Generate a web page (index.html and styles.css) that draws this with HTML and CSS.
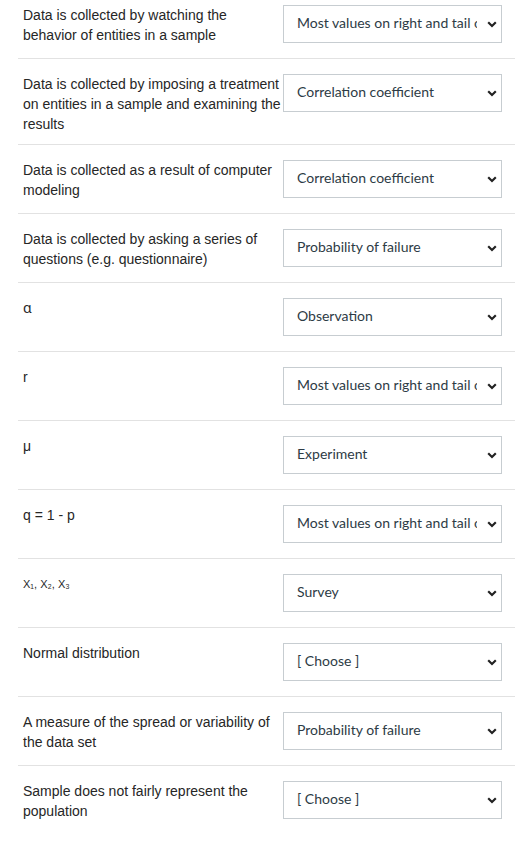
FILE: index.html
```html
<!DOCTYPE html>
<html lang="en">
<head>
<meta charset="utf-8">
<title>Matching</title>
<link rel="stylesheet" href="styles.css">
</head>
<body>
<div class="answers">
  <div class="row first">
    <div class="label">Data is collected by watching the behavior of entities in a sample</div>
    <div class="pick"><select><option>Most values on right and tail on left</option></select><svg class="chev" viewBox="0 0 10 7" width="10" height="7"><path d="M1.2 1.3 L5 5 L8.8 1.3" fill="none" stroke="#222" stroke-width="2.2"/></svg></div>
  </div>
  <div class="row">
    <div class="label">Data is collected by imposing a treatment on entities in a sample and examining the results</div>
    <div class="pick"><select><option>Correlation coefficient</option></select><svg class="chev" viewBox="0 0 10 7" width="10" height="7"><path d="M1.2 1.3 L5 5 L8.8 1.3" fill="none" stroke="#222" stroke-width="2.2"/></svg></div>
  </div>
  <div class="row">
    <div class="label">Data is collected as a result of computer modeling</div>
    <div class="pick"><select><option>Correlation coefficient</option></select><svg class="chev" viewBox="0 0 10 7" width="10" height="7"><path d="M1.2 1.3 L5 5 L8.8 1.3" fill="none" stroke="#222" stroke-width="2.2"/></svg></div>
  </div>
  <div class="row">
    <div class="label">Data is collected by asking a series of questions (e.g. questionnaire)</div>
    <div class="pick"><select><option>Probability of failure</option></select><svg class="chev" viewBox="0 0 10 7" width="10" height="7"><path d="M1.2 1.3 L5 5 L8.8 1.3" fill="none" stroke="#222" stroke-width="2.2"/></svg></div>
  </div>
  <div class="row">
    <div class="label greek">α</div>
    <div class="pick"><select><option>Observation</option></select><svg class="chev" viewBox="0 0 10 7" width="10" height="7"><path d="M1.2 1.3 L5 5 L8.8 1.3" fill="none" stroke="#222" stroke-width="2.2"/></svg></div>
  </div>
  <div class="row">
    <div class="label">r</div>
    <div class="pick"><select><option>Most values on right and tail on left</option></select><svg class="chev" viewBox="0 0 10 7" width="10" height="7"><path d="M1.2 1.3 L5 5 L8.8 1.3" fill="none" stroke="#222" stroke-width="2.2"/></svg></div>
  </div>
  <div class="row">
    <div class="label">μ</div>
    <div class="pick"><select><option>Experiment</option></select><svg class="chev" viewBox="0 0 10 7" width="10" height="7"><path d="M1.2 1.3 L5 5 L8.8 1.3" fill="none" stroke="#222" stroke-width="2.2"/></svg></div>
  </div>
  <div class="row">
    <div class="label">q = 1 - p</div>
    <div class="pick"><select><option>Most values on right and tail on left</option></select><svg class="chev" viewBox="0 0 10 7" width="10" height="7"><path d="M1.2 1.3 L5 5 L8.8 1.3" fill="none" stroke="#222" stroke-width="2.2"/></svg></div>
  </div>
  <div class="row">
    <div class="label small">X₁, X₂, X₃</div>
    <div class="pick"><select><option>Survey</option></select><svg class="chev" viewBox="0 0 10 7" width="10" height="7"><path d="M1.2 1.3 L5 5 L8.8 1.3" fill="none" stroke="#222" stroke-width="2.2"/></svg></div>
  </div>
  <div class="row">
    <div class="label">Normal distribution</div>
    <div class="pick"><select><option>[ Choose ]</option></select><svg class="chev" viewBox="0 0 10 7" width="10" height="7"><path d="M1.2 1.3 L5 5 L8.8 1.3" fill="none" stroke="#222" stroke-width="2.2"/></svg></div>
  </div>
  <div class="row">
    <div class="label">A measure of the spread or variability of the data set</div>
    <div class="pick"><select><option>Probability of failure</option></select><svg class="chev" viewBox="0 0 10 7" width="10" height="7"><path d="M1.2 1.3 L5 5 L8.8 1.3" fill="none" stroke="#222" stroke-width="2.2"/></svg></div>
  </div>
  <div class="row">
    <div class="label">Sample does not fairly represent the population</div>
    <div class="pick"><select><option>[ Choose ]</option></select><svg class="chev" viewBox="0 0 10 7" width="10" height="7"><path d="M1.2 1.3 L5 5 L8.8 1.3" fill="none" stroke="#222" stroke-width="2.2"/></svg></div>
  </div>
</div>
</body>
</html>
```
FILE: styles.css
```css
html, body {
  margin: 0;
  padding: 0;
  background: #ffffff;
}

.answers {
  margin-left: 18px;
}

.row {
  display: flex;
  align-items: flex-start;
  padding: 15px 0 10px 5px;
  border-top: 1px solid #e2e2e2;
}

.row.first {
  padding-top: 5px;
  border-top: none;
}

.label {
  flex: 0 0 260px;
  font-family: "Liberation Sans", Arial, sans-serif;
  font-size: 14px;
  line-height: 20px;
  color: #262626;
}

.label.greek {
  font-family: "Noto Sans", "Liberation Sans", sans-serif;
}

.label.small {
  font-size: 11px;
}

.pick {
  position: relative;
  width: 219px;
  height: 38px;
  margin-bottom: 5px;
}

.pick select {
  -webkit-appearance: none;
  appearance: none;
  box-sizing: border-box;
  width: 219px;
  height: 38px;
  margin: 0;
  border: 1px solid #c7cdd1;
  border-radius: 0;
  background: #ffffff;
  padding: 0 24px 3px 13px;
  font-family: Lato, "Open Sans", sans-serif;
  font-size: 14px;
  color: #2d3b45;
  outline: none;
}

.chev {
  position: absolute;
  right: 5px;
  top: 16px;
  pointer-events: none;
}
```
